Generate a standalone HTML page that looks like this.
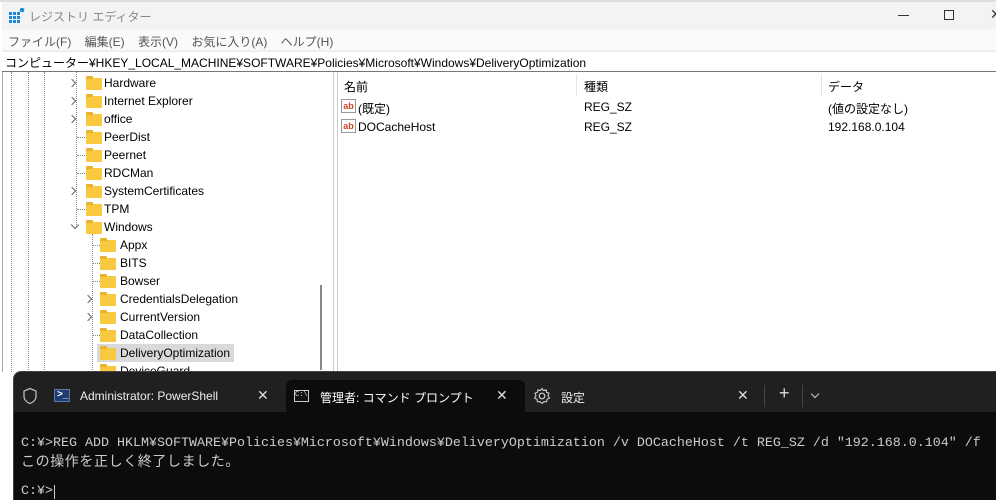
<!DOCTYPE html>
<html><head><meta charset="utf-8"><style>
*{margin:0;padding:0;box-sizing:border-box}
body{width:996px;height:500px;overflow:hidden;background:#fff;position:relative;font-family:"Liberation Sans","Noto Sans CJK JP",sans-serif;font-size:12px;color:#000}
.a{position:absolute;white-space:nowrap}
.fold{position:absolute;width:16px;height:12px;background:#f8c93e;border-radius:1px}
.fold:before{content:"";position:absolute;left:0;top:-2px;width:7px;height:3px;background:#e8b22a;border-radius:1px 1px 0 0}
.dv{position:absolute;border-left:1px dotted #888;width:0}
.dh{position:absolute;border-top:1px dotted #888;height:0}
.chev{position:absolute;width:6px;height:6px;border-right:1.3px solid #666;border-bottom:1.3px solid #666}
.ab{position:absolute;width:15px;height:14px;border:1px solid #999;background:#fff;font-size:9px;font-weight:bold;color:#d04020;line-height:12px;text-align:center}
.term{font-family:"Liberation Mono","Noto Sans CJK JP",monospace;font-size:13.33px;color:#ccc}
</style></head><body>
<div class="a" style="left:0;top:0;width:996px;height:2px;background:#ddd"></div>
<div class="a" style="left:2px;top:2px;width:994px;height:28px;background:#f3f3f3"></div>
<svg class="a" style="left:9px;top:8px" width="16" height="16"><g fill="#1a8ad8"><rect x="0" y="4" width="3" height="3"/><rect x="4" y="4" width="3" height="3"/><rect x="8" y="4" width="3" height="3"/><rect x="0" y="8" width="3" height="3"/><rect x="4" y="8" width="3" height="3"/><rect x="8" y="8" width="3" height="3"/><rect x="0" y="12" width="3" height="3"/><rect x="4" y="12" width="3" height="3"/><rect x="8" y="12" width="3" height="3"/><rect x="11" y="0" width="4" height="4" transform="rotate(15 13 2)"/></g></svg>
<div class="a" style="left:29px;top:8px;color:#888">レジストリ エディター</div>
<div class="a" style="left:898px;top:15px;width:11px;height:1px;background:#333"></div>
<div class="a" style="left:944px;top:10px;width:10px;height:10px;border:1px solid #333"></div>
<div class="a" style="left:990px;top:6px;color:#333;font-size:14px">✕</div>
<div class="a" style="left:2px;top:30px;width:994px;height:20px;background:#fafafa"></div>
<div class="a" style="left:8px;top:33px;color:#555">ファイル(F)&nbsp;&nbsp;&nbsp;&nbsp;編集(E)&nbsp;&nbsp;&nbsp;&nbsp;表示(V)&nbsp;&nbsp;&nbsp;&nbsp;お気に入り(A)&nbsp;&nbsp;&nbsp;&nbsp;ヘルプ(H)</div>
<div class="a" style="left:2px;top:50px;width:994px;height:2px;background:#eee"></div>
<div class="a" style="left:5px;top:54px">コンピューター¥HKEY_LOCAL_MACHINE¥SOFTWARE¥Policies¥Microsoft¥Windows¥DeliveryOptimization</div>
<div class="a" style="left:2px;top:71px;width:994px;height:1px;background:#777"></div>
<div class="a" style="left:2px;top:72px;width:1px;height:300px;background:#aaa"></div>
<div class="a" style="left:333px;top:72px;width:1px;height:300px;background:#ccc"></div>
<div class="a" style="left:320px;top:285px;width:2px;height:85px;background:#888"></div>
<div class="dv" style="left:11px;top:72px;height:300px"></div>
<div class="dv" style="left:28px;top:72px;height:300px"></div>
<div class="dv" style="left:44px;top:72px;height:300px"></div>
<div class="dv" style="left:76px;top:72px;height:155px"></div>
<div class="dv" style="left:92px;top:234px;height:140px"></div>
<div class="chev" style="left:69px;top:80px;transform:rotate(-45deg)"></div>
<div class="chev" style="left:69px;top:98px;transform:rotate(-45deg)"></div>
<div class="chev" style="left:69px;top:116px;transform:rotate(-45deg)"></div>
<div class="dh" style="left:77px;top:137px;width:8px"></div>
<div class="dh" style="left:77px;top:155px;width:8px"></div>
<div class="dh" style="left:77px;top:173px;width:8px"></div>
<div class="chev" style="left:69px;top:188px;transform:rotate(-45deg)"></div>
<div class="dh" style="left:77px;top:209px;width:8px"></div>
<div class="chev" style="left:72px;top:222px;transform:rotate(45deg)"></div>
<div class="fold" style="left:86px;top:78px"></div><div class="a" style="left:104px;top:76px">Hardware</div>
<div class="fold" style="left:86px;top:96px"></div><div class="a" style="left:104px;top:94px">Internet Explorer</div>
<div class="fold" style="left:86px;top:114px"></div><div class="a" style="left:104px;top:112px">office</div>
<div class="fold" style="left:86px;top:132px"></div><div class="a" style="left:104px;top:130px">PeerDist</div>
<div class="fold" style="left:86px;top:150px"></div><div class="a" style="left:104px;top:148px">Peernet</div>
<div class="fold" style="left:86px;top:168px"></div><div class="a" style="left:104px;top:166px">RDCMan</div>
<div class="fold" style="left:86px;top:186px"></div><div class="a" style="left:104px;top:184px">SystemCertificates</div>
<div class="fold" style="left:86px;top:204px"></div><div class="a" style="left:104px;top:202px">TPM</div>
<div class="fold" style="left:86px;top:222px"></div><div class="a" style="left:104px;top:220px">Windows</div>
<div class="dh" style="left:93px;top:245px;width:7px"></div>
<div class="dh" style="left:93px;top:263px;width:7px"></div>
<div class="dh" style="left:93px;top:281px;width:7px"></div>
<div class="chev" style="left:85px;top:296px;transform:rotate(-45deg)"></div>
<div class="chev" style="left:85px;top:314px;transform:rotate(-45deg)"></div>
<div class="dh" style="left:93px;top:335px;width:7px"></div>
<div class="a" style="left:97px;top:344px;width:137px;height:18px;background:#d9d9d9"></div>
<div class="fold" style="left:100px;top:240px"></div><div class="a" style="left:120px;top:238px">Appx</div>
<div class="fold" style="left:100px;top:258px"></div><div class="a" style="left:120px;top:256px">BITS</div>
<div class="fold" style="left:100px;top:276px"></div><div class="a" style="left:120px;top:274px">Bowser</div>
<div class="fold" style="left:100px;top:294px"></div><div class="a" style="left:120px;top:292px">CredentialsDelegation</div>
<div class="fold" style="left:100px;top:312px"></div><div class="a" style="left:120px;top:310px">CurrentVersion</div>
<div class="fold" style="left:100px;top:330px"></div><div class="a" style="left:120px;top:328px">DataCollection</div>
<div class="fold" style="left:100px;top:348px"></div><div class="a" style="left:120px;top:346px">DeliveryOptimization</div>
<div class="fold" style="left:100px;top:366px"></div><div class="a" style="left:120px;top:364px">DeviceGuard</div>
<div class="a" style="left:337px;top:72px;width:1px;height:300px;background:#ccc"></div>
<div class="a" style="left:576px;top:74px;width:1px;height:22px;background:#e5e5e5"></div>
<div class="a" style="left:821px;top:74px;width:1px;height:22px;background:#e5e5e5"></div>
<div class="a" style="left:344px;top:78px">名前</div>
<div class="a" style="left:584px;top:78px">種類</div>
<div class="a" style="left:828px;top:78px">データ</div>
<div class="ab" style="left:341px;top:99px">ab</div><div class="a" style="left:358px;top:100px">(既定)</div>
<div class="a" style="left:584px;top:100px">REG_SZ</div><div class="a" style="left:828px;top:100px">(値の設定なし)</div>
<div class="ab" style="left:341px;top:119px">ab</div><div class="a" style="left:358px;top:120px">DOCacheHost</div>
<div class="a" style="left:584px;top:120px">REG_SZ</div><div class="a" style="left:828px;top:120px">192.168.0.104</div>
<div class="a" style="left:13px;top:371px;width:983px;height:129px;background:#202020;border-radius:8px 0 0 0;border:1px solid #444;border-right:0;border-bottom:0"></div>
<div class="a" style="left:14px;top:412px;width:982px;height:88px;background:#0c0c0c"></div>
<div class="a" style="left:286px;top:380px;width:239px;height:33px;background:#0c0c0c;border-radius:6px 6px 0 0"></div>
<svg class="a" style="left:22px;top:387px" width="16" height="18"><path d="M8 1.5 L14 4 V9 C14 13 11 15.5 8 16.5 C5 15.5 2 13 2 9 V4 Z" fill="none" stroke="#bbb" stroke-width="1.3"/></svg>
<div class="a" style="left:54px;top:389px;width:16px;height:13px;background:#1e3c6e;border:1px solid #5a7ab0"></div>
<div class="a" style="left:57px;top:389px;color:#fff;font-size:10px;font-weight:bold">&gt;_</div>
<div class="a" style="left:80px;top:389px;color:#eee">Administrator: PowerShell</div>
<div class="a" style="left:257px;top:387px;color:#ddd;font-size:14px">✕</div>
<div class="a" style="left:294px;top:390px;width:15px;height:12px;border:1px solid #ccc;background:#111;color:#ddd;font-size:7px;line-height:8px;font-family:'Liberation Mono',monospace">C:\</div>
<div class="a" style="left:320px;top:389px;color:#fff">管理者: コマンド プロンプト</div>
<div class="a" style="left:496px;top:387px;color:#ddd;font-size:14px">✕</div>
<svg class="a" style="left:533px;top:387px" width="18" height="18"><circle cx="9" cy="9" r="2.8" fill="none" stroke="#ccc" stroke-width="1.2"/><path d="M9 1.5 L10.5 3.5 L13 2.8 L13.6 5.3 L16 6.2 L15 8.7 L16.5 11 L14 12.2 L13.6 14.8 L11 14.6 L9 16.5 L7 14.6 L4.4 14.8 L4 12.2 L1.5 11 L3 8.7 L2 6.2 L4.4 5.3 L5 2.8 L7.5 3.5 Z" fill="none" stroke="#ccc" stroke-width="1.1"/></svg>
<div class="a" style="left:561px;top:389px;color:#eee">設定</div>
<div class="a" style="left:737px;top:387px;color:#ddd;font-size:14px">✕</div>
<div class="a" style="left:764px;top:385px;width:1px;height:22px;background:#444"></div>
<div class="a" style="left:779px;top:383px;color:#ddd;font-size:18px">+</div>
<div class="a" style="left:802px;top:385px;width:1px;height:22px;background:#444"></div>
<div class="chev" style="left:812px;top:391px;width:6px;height:6px;border-color:#ccc;transform:rotate(45deg)"></div>
<div class="a term" style="left:21px;top:436px">C:¥&gt;REG ADD HKLM¥SOFTWARE¥Policies¥Microsoft¥Windows¥DeliveryOptimization /v DOCacheHost /t REG_SZ /d "192.168.0.104" /f</div>
<div class="a term" style="left:21px;top:451px;font-size:14px;letter-spacing:0.6px">この操作を正しく終了しました。</div>
<div class="a term" style="left:21px;top:484px">C:¥&gt;</div>
<div class="a" style="left:54px;top:485px;width:1px;height:14px;background:#ccc"></div>
</body></html>
